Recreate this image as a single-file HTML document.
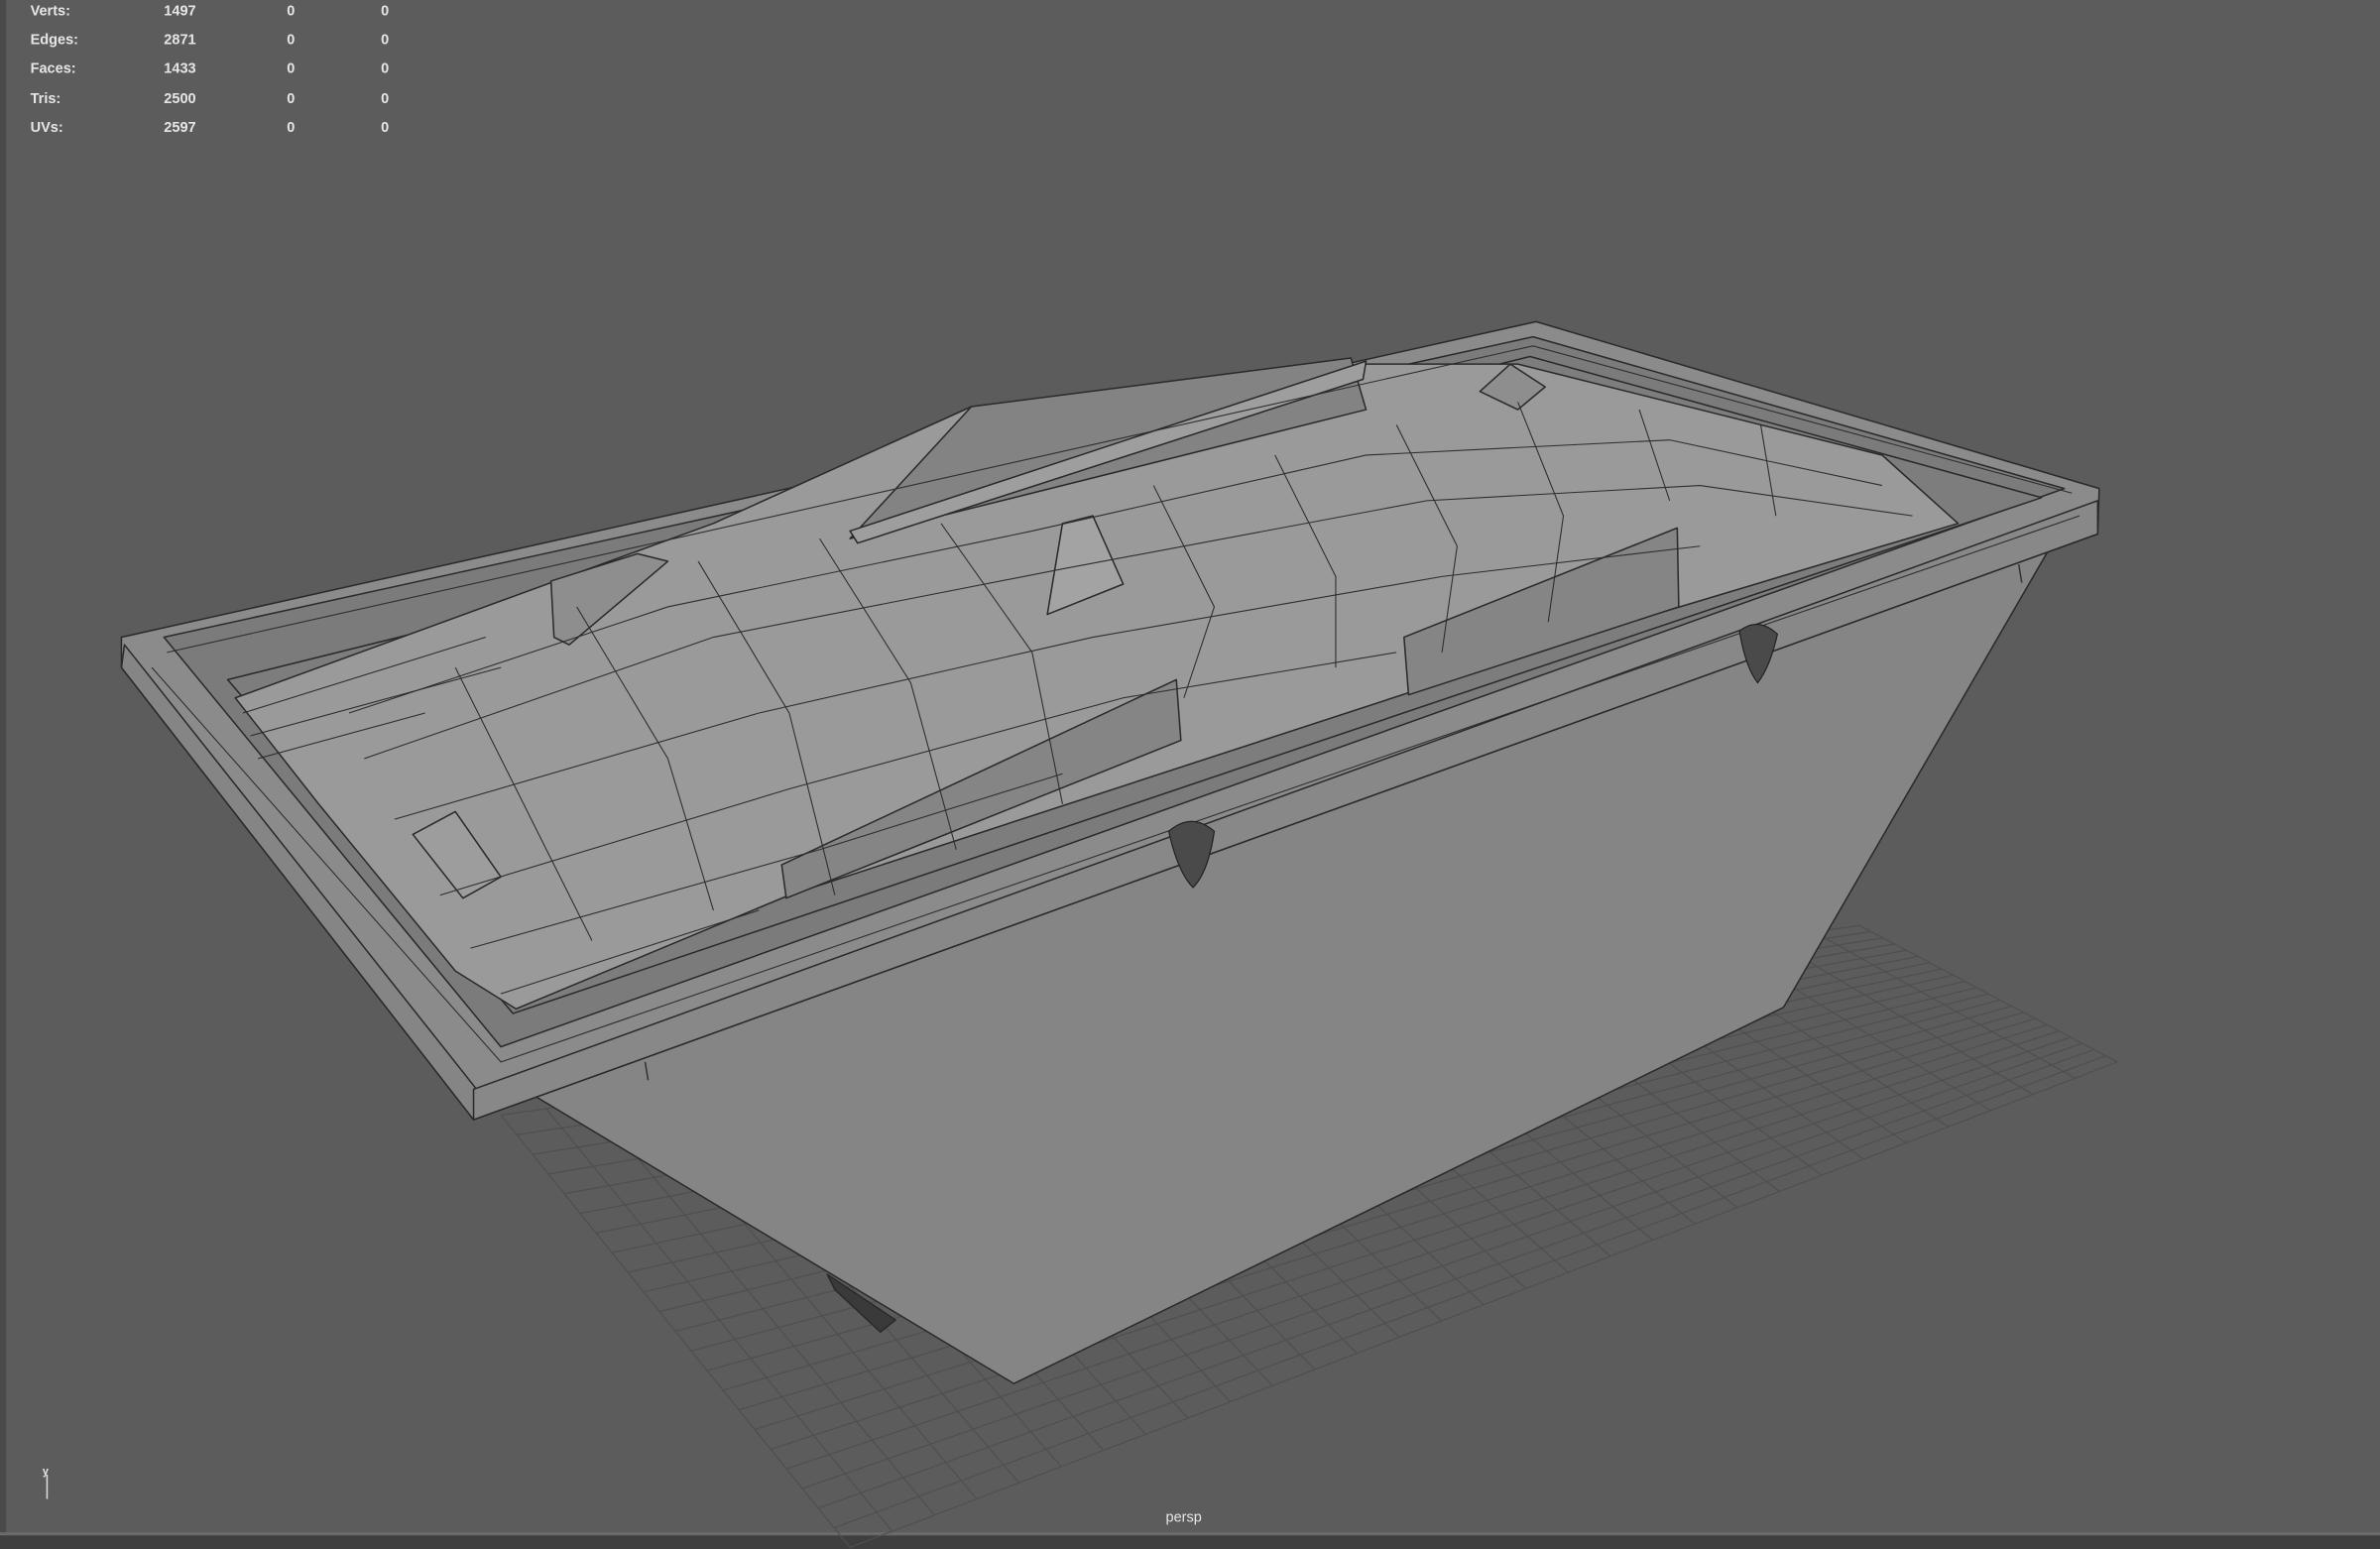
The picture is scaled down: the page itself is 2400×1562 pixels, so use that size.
<!DOCTYPE html>
<html><head><meta charset="utf-8"><style>
html,body{margin:0;padding:0;background:#5c5c5c;overflow:hidden}
svg{display:block}
.t{font-family:"Liberation Sans",sans-serif;font-weight:bold;font-size:9.5px;fill:#e6e6e6}
</style></head><body>
<svg id="s" width="2400" height="1562" viewBox="0 0 1568 1021" preserveAspectRatio="none" xmlns="http://www.w3.org/2000/svg">
<rect width="1568" height="1021" fill="#5c5c5c"/>
<rect x="0" y="0" width="4" height="1021" fill="#4a4a4a"/>
<rect x="0" y="1012" width="1568" height="9" fill="#3f3f3f"/>
<rect x="0" y="1010" width="1568" height="2" fill="#6a6a6a"/>
<g id="grid" stroke="#4f4f4f" stroke-width="0.8"></g>
<g class="t">
<text x="20" y="10">Verts:</text><text x="108" y="10">1497</text><text x="189" y="10">0</text><text x="251" y="10">0</text>
<text x="20" y="29">Edges:</text><text x="108" y="29">2871</text><text x="189" y="29">0</text><text x="251" y="29">0</text>
<text x="20" y="48">Faces:</text><text x="108" y="48">1433</text><text x="189" y="48">0</text><text x="251" y="48">0</text>
<text x="20" y="68">Tris:</text><text x="108" y="68">2500</text><text x="189" y="68">0</text><text x="251" y="68">0</text>
<text x="20" y="87">UVs:</text><text x="108" y="87">2597</text><text x="189" y="87">0</text><text x="251" y="87">0</text>
<text x="768" y="1003" style="font-weight:normal">persp</text>
</g>
<line x1="31" y1="972" x2="31" y2="988" stroke="#ddd" stroke-width="1"/>
<text x="28" y="972" class="t" style="font-size:7px">y</text>
<g stroke="#2a2a2a" stroke-width="1" stroke-linejoin="round">
<polygon points="545,840 590,870 580,878 550,850" fill="#3a3a3a"/>
<!-- front face -->
<polygon points="340,715 1350,362 1175,664 668,912" fill="#858585"/>
<line x1="1330" y1="372" x2="1332" y2="384" stroke="#333"/>
<line x1="425" y1="700" x2="427" y2="712" stroke="#333"/>
<!-- rim outer -->
<polygon points="80,420 1012,212 1383,322 1382,352 312,738 80,440" fill="#8b8b8b"/>
<polygon points="80,440 312,738 314,718 82,425" fill="#858585"/>
<polygon points="312,718 1382,330 1382,352 312,738" fill="#888"/>
<!-- rim inner opening -->
<polygon points="108,420 1010,222 1360,322 330,690" fill="#7b7b7b"/>
<polygon points="150,448 1008,235 1345,328 338,668" fill="#7d7d7d"/>
<!-- contents -->
<polygon points="155,460 470,345 640,268 900,240 1000,240 1240,300 1290,345 1040,420 520,590 340,665 300,640 210,530" fill="#9a9a9a"/>
<polygon points="640,268 890,236 900,270 560,355" fill="#838383"/>
<polygon points="560,350 900,238 898,250 565,358" fill="#9e9e9e"/>
<polygon points="1105,348 925,420 928,458 1106,400" fill="#858585"/>
<polygon points="775,448 515,570 518,592 778,488" fill="#858585"/>
<polygon points="363,383 420,365 440,370 375,425 365,420" fill="#8e8e8e"/>
<polygon points="975,258 995,240 1018,255 1000,270" fill="#8e8e8e"/>
<polygon points="700,345 720,340 740,385 690,405" fill="#a3a3a3"/>
<polygon points="272,550 300,535 330,578 305,592" fill="#9d9d9d"/>
</g>
<g stroke="#2d2d2d" stroke-width="0.7" fill="none">
<path d="M230,470 L440,400 L680,350 L900,300 L1100,290 L1240,320"/>
<path d="M240,500 L470,420 L700,375 L940,330 L1120,320 L1260,340"/>
<path d="M260,540 L500,470 L720,420 L950,380 L1120,360"/>
<path d="M290,590 L520,520 L740,460 L920,430"/>
<path d="M310,625 L540,560 L700,510"/>
<path d="M330,655 L500,600"/>
<path d="M300,440 L360,560 L390,620"/>
<path d="M380,400 L440,500 L470,600"/>
<path d="M460,370 L520,470 L550,590"/>
<path d="M540,355 L600,450 L630,560"/>
<path d="M620,345 L680,430 L700,530"/>
<path d="M760,320 L800,400 L780,460"/>
<path d="M840,300 L880,380 L880,440"/>
<path d="M920,280 L960,360 L950,430"/>
<path d="M1000,265 L1030,340 L1020,410"/>
<path d="M1080,270 L1100,330"/>
<path d="M1160,280 L1170,340"/>
<path d="M160,470 L320,420"/><path d="M165,485 L330,440"/><path d="M170,500 L280,470"/>
<path d="M110,430 L1010,228 L1365,325"/>
<path d="M100,440 L330,700 L1370,340"/>
</g>
<g fill="#4a4a4a" stroke="#222" stroke-width="0.8">
<path d="M770,548 Q785,535 800,548 Q796,575 786,585 Q776,575 770,548Z"/>
<path d="M1146,416 Q1158,406 1171,418 Q1166,440 1158,450 Q1150,440 1146,416Z"/>
</g>
<script>
var g=document.getElementById('grid'),ns='http://www.w3.org/2000/svg';
var L=[330,735],T=[1225,610],R=[1395,700],B=[560,1020];
function lerp(a,b,t){return [a[0]+(b[0]-a[0])*t,a[1]+(b[1]-a[1])*t];}
function ln(p,q){var l=document.createElementNS(ns,'line');l.setAttribute('x1',p[0]);l.setAttribute('y1',p[1]);l.setAttribute('x2',q[0]);l.setAttribute('y2',q[1]);g.appendChild(l);}
for(var i=0;i<=30;i++){var t=i/30;ln(lerp(L,T,t),lerp(B,R,t));}
for(var i=0;i<=22;i++){var t=i/22;ln(lerp(L,B,t),lerp(T,R,t));}
</script>
</svg>
</body></html>
